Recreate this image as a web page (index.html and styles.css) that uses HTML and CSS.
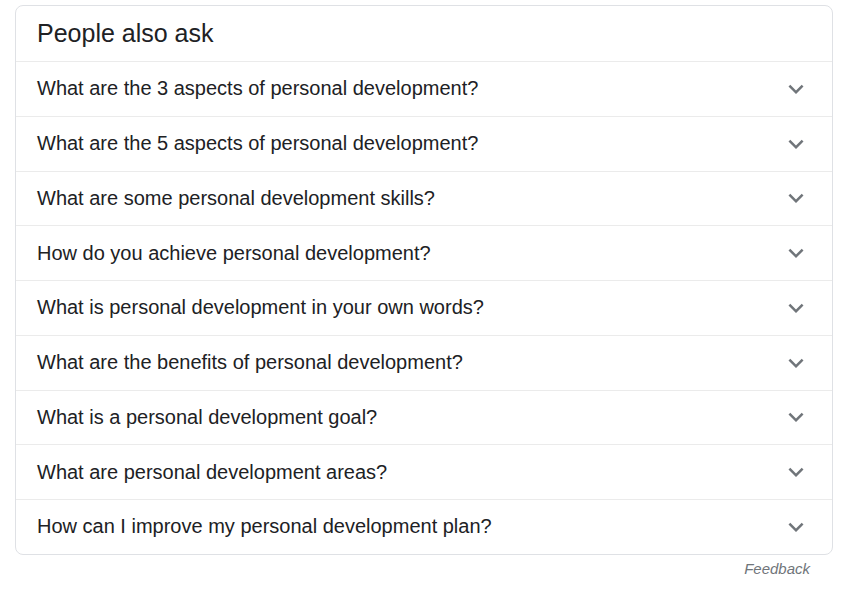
FILE: index.html
```html
<!DOCTYPE html>
<html>
<head>
<title>People also ask</title>
<link rel="stylesheet" href="styles.css">
</head>
<body>
<section class='paa'>
	<div class='paa-card'>
		<h2 class='paa-title'>People also ask</h2>
		<div class='paa-row'><span class='paa-question'>What are the 3 aspects of personal development?</span><svg class='paa-chevron' viewBox='0 0 24 24'><path d='M16.59 8.59L12 13.17 7.41 8.59 6 10l6 6 6-6z'/></svg></div>
		<div class='paa-row'><span class='paa-question'>What are the 5 aspects of personal development?</span><svg class='paa-chevron' viewBox='0 0 24 24'><path d='M16.59 8.59L12 13.17 7.41 8.59 6 10l6 6 6-6z'/></svg></div>
		<div class='paa-row'><span class='paa-question'>What are some personal development skills?</span><svg class='paa-chevron' viewBox='0 0 24 24'><path d='M16.59 8.59L12 13.17 7.41 8.59 6 10l6 6 6-6z'/></svg></div>
		<div class='paa-row'><span class='paa-question'>How do you achieve personal development?</span><svg class='paa-chevron' viewBox='0 0 24 24'><path d='M16.59 8.59L12 13.17 7.41 8.59 6 10l6 6 6-6z'/></svg></div>
		<div class='paa-row'><span class='paa-question'>What is personal development in your own words?</span><svg class='paa-chevron' viewBox='0 0 24 24'><path d='M16.59 8.59L12 13.17 7.41 8.59 6 10l6 6 6-6z'/></svg></div>
		<div class='paa-row'><span class='paa-question'>What are the benefits of personal development?</span><svg class='paa-chevron' viewBox='0 0 24 24'><path d='M16.59 8.59L12 13.17 7.41 8.59 6 10l6 6 6-6z'/></svg></div>
		<div class='paa-row'><span class='paa-question'>What is a personal development goal?</span><svg class='paa-chevron' viewBox='0 0 24 24'><path d='M16.59 8.59L12 13.17 7.41 8.59 6 10l6 6 6-6z'/></svg></div>
		<div class='paa-row'><span class='paa-question'>What are personal development areas?</span><svg class='paa-chevron' viewBox='0 0 24 24'><path d='M16.59 8.59L12 13.17 7.41 8.59 6 10l6 6 6-6z'/></svg></div>
		<div class='paa-row'><span class='paa-question'>How can I improve my personal development plan?</span><svg class='paa-chevron' viewBox='0 0 24 24'><path d='M16.59 8.59L12 13.17 7.41 8.59 6 10l6 6 6-6z'/></svg></div>
	</div>
	<div class='paa-footer'><span class='paa-feedback'>Feedback</span></div>
</section>
</body>
</html>
```

FILE: styles.css
```css
body {
	margin : 0;
	background : #fff;
	font-family : "Liberation Sans", Arial, sans-serif;
	color : #202124;
}

.paa {
	width : 818px;
	padding : 5px 0 0 15px;
}

.paa-card {
	border : 1px solid #dfe1e5;
	border-radius : 8px;
	overflow : hidden;
}

.paa-title {
	margin : 0;
	height : 53px;
	padding : 0 0 2px 21px;
	display : flex;
	align-items : center;
	font-size : 25px;
	font-weight : normal;
	line-height : 30px;
}

.paa-row {
	height : 53.75px;
	border-top : 1px solid #ebebeb;
	padding : 0 21px 0 21px;
	display : flex;
	align-items : center;
	justify-content : space-between;
	font-size : 20px;
}

.paa-chevron {
	width : 30px;
	height : 30px;
	fill : #70757a;
}

.paa-footer {
	display : flex;
	justify-content : flex-end;
	padding : 5px 23px 0 0;
}

.paa-feedback {
	font-size : 15px;
	font-style : italic;
	color : #70757a;
}
```
